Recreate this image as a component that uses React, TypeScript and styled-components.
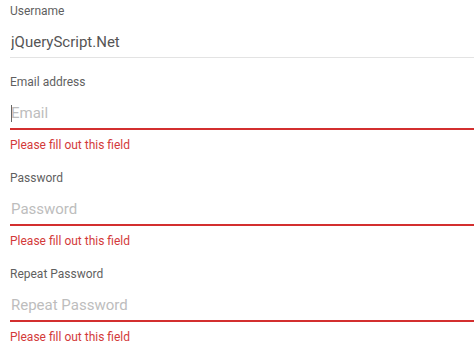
import styled, { createGlobalStyle } from "styled-components";

const GlobalStyle = createGlobalStyle`
  body {
    margin: 0;
    background: #ffffff;
    font-family: Roboto, "Liberation Sans", sans-serif;
  }
`;

const Form = styled.form`
  display: flex;
  flex-direction: column;
  padding: 3px 0 0 10px;
`;

const Field = styled.div`
  display: flex;
  flex-direction: column;
  margin-bottom: 16px;
`;

const Label = styled.label`
  font-size: 12px;
  line-height: 16px;
  color: #5f5f5f;
`;

const InputWrap = styled.div`
  position: relative;
  margin-top: 8px;
`;

const Input = styled.input<{ $invalid?: boolean }>`
  display: block;
  width: 100%;
  box-sizing: border-box;
  height: ${(p) => (p.$invalid ? "32px" : "31px")};
  padding: 0 0 0 1px;
  border: none;
  border-bottom: ${(p) => (p.$invalid ? "2px solid #d32f2f" : "1px solid #e3e3e3")};
  outline: none;
  background: transparent;
  font-family: Roboto, "Liberation Sans", sans-serif;
  font-size: 15px;
  color: #555555;
  &::placeholder {
    color: #bdbdbd;
  }
`;

const Caret = styled.span`
  position: absolute;
  left: 1px;
  top: 7px;
  width: 1px;
  height: 17px;
  background: #666;
`;

const Error = styled.div`
  margin-top: 6px;
  font-size: 12px;
  line-height: 18px;
  color: #d33a3a;
`;

interface FieldInfo {
  label: string;
  placeholder: string;
  value?: string;
  type?: string;
  invalid?: boolean;
  focused?: boolean;
}

const fields: FieldInfo[] = [
  { label: "Username", placeholder: "Username", value: "jQueryScript.Net" },
  { label: "Email address", placeholder: "Email", type: "email", invalid: true, focused: true },
  { label: "Password", placeholder: "Password", type: "password", invalid: true },
  { label: "Repeat Password", placeholder: "Repeat Password", type: "password", invalid: true },
];

function App() {
  return (
    <>
      <GlobalStyle />
      <Form onSubmit={(e) => e.preventDefault()}>
        {fields.map((f) => (
          <Field key={f.label}>
            <Label>{f.label}</Label>
            <InputWrap>
              <Input
                type={f.type || "text"}
                placeholder={f.placeholder}
                defaultValue={f.value}
                $invalid={f.invalid}
                readOnly
              />
              {f.focused && <Caret />}
            </InputWrap>
            {f.invalid && <Error>Please fill out this field</Error>}
          </Field>
        ))}
      </Form>
    </>
  );
}

export default App;
